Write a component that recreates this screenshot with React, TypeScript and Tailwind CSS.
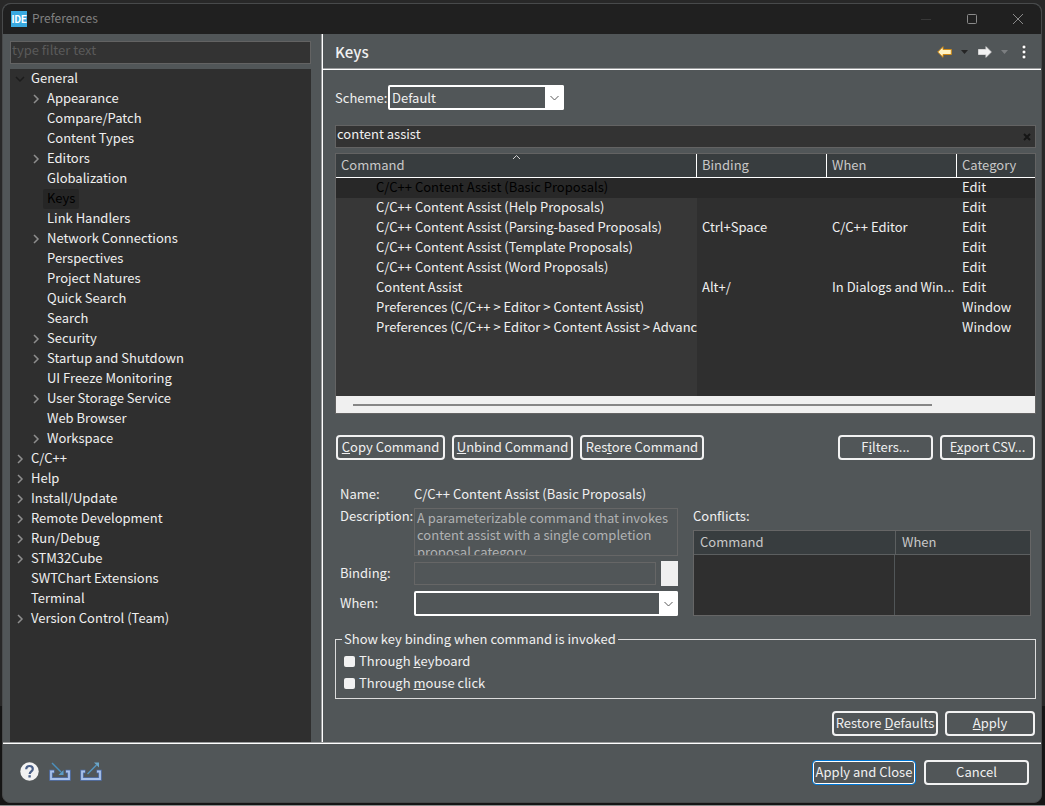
import React, { useState } from 'react';
import clsx from 'clsx';

interface TreeNode {
  label: string;
  level: number;
  state?: 'open' | 'closed';
}

interface CommandRow {
  command: string;
  binding?: string;
  when?: string;
  category: string;
}

const treeNodes: TreeNode[] = [
  { label: 'General', level: 0, state: 'open' },
  { label: 'Appearance', level: 1, state: 'closed' },
  { label: 'Compare/Patch', level: 1 },
  { label: 'Content Types', level: 1 },
  { label: 'Editors', level: 1, state: 'closed' },
  { label: 'Globalization', level: 1 },
  { label: 'Keys', level: 1 },
  { label: 'Link Handlers', level: 1 },
  { label: 'Network Connections', level: 1, state: 'closed' },
  { label: 'Perspectives', level: 1 },
  { label: 'Project Natures', level: 1 },
  { label: 'Quick Search', level: 1 },
  { label: 'Search', level: 1 },
  { label: 'Security', level: 1, state: 'closed' },
  { label: 'Startup and Shutdown', level: 1, state: 'closed' },
  { label: 'UI Freeze Monitoring', level: 1 },
  { label: 'User Storage Service', level: 1, state: 'closed' },
  { label: 'Web Browser', level: 1 },
  { label: 'Workspace', level: 1, state: 'closed' },
  { label: 'C/C++', level: 0, state: 'closed' },
  { label: 'Help', level: 0, state: 'closed' },
  { label: 'Install/Update', level: 0, state: 'closed' },
  { label: 'Remote Development', level: 0, state: 'closed' },
  { label: 'Run/Debug', level: 0, state: 'closed' },
  { label: 'STM32Cube', level: 0, state: 'closed' },
  { label: 'SWTChart Extensions', level: 0 },
  { label: 'Terminal', level: 0 },
  { label: 'Version Control (Team)', level: 0, state: 'closed' },
];

const commands: CommandRow[] = [
  { command: 'C/C++ Content Assist (Basic Proposals)', category: 'Edit' },
  { command: 'C/C++ Content Assist (Help Proposals)', category: 'Edit' },
  { command: 'C/C++ Content Assist (Parsing-based Proposals)', binding: 'Ctrl+Space', when: 'C/C++ Editor', category: 'Edit' },
  { command: 'C/C++ Content Assist (Template Proposals)', category: 'Edit' },
  { command: 'C/C++ Content Assist (Word Proposals)', category: 'Edit' },
  { command: 'Content Assist', binding: 'Alt+/', when: 'In Dialogs and Win...', category: 'Edit' },
  { command: 'Preferences (C/C++ > Editor > Content Assist)', category: 'Window' },
  { command: 'Preferences (C/C++ > Editor > Content Assist > Advanced)', category: 'Window' },
];

const Chevron: React.FC<{ open?: boolean }> = ({ open }) => (
  <svg width="10" height="10" viewBox="0 0 10 10" fill="none" strokeWidth="1.5">
    {open ? (
      <path d="M1 3l4 4 4-4" stroke="#1c1c1c" />
    ) : (
      <path d="M3 1l4 4-4 4" stroke="#8e8e8e" />
    )}
  </svg>
);

interface PushButtonProps {
  children: React.ReactNode;
  className?: string;
  primary?: boolean;
}

const PushButton: React.FC<PushButtonProps> = ({ children, className, primary }) => (
  <button
    type="button"
    className={clsx(
      'flex h-[25px] shrink-0 items-center justify-center rounded-sm pb-0.5 whitespace-nowrap',
      primary
        ? 'border border-[#0078d7] shadow-[inset_0_0_0_1px_#ffffff]'
        : 'border-2 border-[#f2f2f2]',
      className
    )}
  >
    {children}
  </button>
);

const Combo: React.FC<{ id: string; options: string[]; className?: string }> = ({ id, options, className }) => (
  <div className={clsx('relative h-[25px]', className)}>
    <select
      id={id}
      className="h-full w-full appearance-none rounded-xs border-2 border-white bg-[#515658] pl-0.5 outline-none"
    >
      {options.map((option) => (
        <option key={option}>{option}</option>
      ))}
    </select>
    <span className="pointer-events-none absolute inset-y-0 right-0 flex w-[19px] items-center justify-center rounded-r-xs bg-white">
      <svg width="9" height="6" viewBox="0 0 9 6" fill="none" stroke="#5a5a5a">
        <path d="M.5 1l4 4 4-4" />
      </svg>
    </span>
  </div>
);

const TitleBar: React.FC = () => (
  <header className="flex h-[30px] items-center rounded-t-lg bg-[#202020] pl-2 text-[#808080]">
    <svg width="16" height="16" viewBox="0 0 16 16">
      <rect width="16" height="16" fill="#39a9e0" />
      <text x="8" y="11.5" textAnchor="middle" fontFamily="Roboto, sans-serif" fontSize="10" fontWeight="700" fill="#fff">
        IDE
      </text>
    </svg>
    <h1 className="ml-[5px] flex-1 pb-0.5 text-xs">Preferences</h1>
    <button type="button" aria-label="Minimize" className="flex h-full w-[46px] items-center justify-center">
      <svg width="10" height="10"><path d="M0 5.5h10" stroke="#383838" /></svg>
    </button>
    <button type="button" aria-label="Maximize" className="flex h-full w-[46px] items-center justify-center">
      <svg width="10" height="10" fill="none"><rect x=".5" y=".5" width="9" height="9" rx="1" stroke="#8a8a8a" /></svg>
    </button>
    <button type="button" aria-label="Close" className="flex h-full w-[46px] items-center justify-center">
      <svg width="10" height="10"><path d="M0 0l10 10M10 0L0 10" stroke="#8a8a8a" /></svg>
    </button>
  </header>
);

const Sidebar: React.FC = () => (
  <aside className="flex w-[319px] shrink-0 flex-col pt-[7px] pr-[11px] pl-[7px]">
    <input
      type="text"
      aria-label="Filter preferences"
      placeholder="type filter text"
      className="h-[23px] border border-[#636363] bg-[#333333] px-px pb-1.5 outline-none placeholder:text-[#5a5a5a]"
    />
    <ul className="mt-[5px] flex-1 bg-[#2f2f2f]">
      {treeNodes.map((node) => (
        <li key={node.label} className={clsx('flex h-5 items-center', node.level === 0 ? 'pl-[5px]' : 'pl-[21px]')}>
          <span className="flex w-3 shrink-0">
            {node.state && <Chevron open={node.state === 'open'} />}
          </span>
          <span className={clsx('h-5 px-1 leading-[18px]', node.label === 'Keys' && 'rounded-xs bg-[#262626] text-black')}>
            {node.label}
          </span>
        </li>
      ))}
    </ul>
  </aside>
);

const PageHeader: React.FC = () => (
  <div className="flex h-9 items-center border-b border-white pr-[14px] pl-3 shadow-[inset_0_-1px_0_#9a9c9d]">
    <h2 className="flex-1 text-[15px] font-medium">Keys</h2>
    <button type="button" aria-label="Back" className="flex">
      <svg width="15" height="12" viewBox="0 0 15 12">
        <path d="M.7 6L6 .7V3.500h8.300v5H6v2.800z" fill="#fff3c4" stroke="#d08a14" />
      </svg>
    </button>
    <button type="button" aria-label="Back history" className="ml-[9px] flex">
      <svg width="7" height="4"><path d="M0 0h7L3.500 4z" fill="#252525" /></svg>
    </button>
    <button type="button" aria-label="Forward" className="ml-2.5 flex">
      <svg width="14" height="12" viewBox="0 0 14 12">
        <path d="M13.300 6L8 .7V3.500H.5v5H8v2.800z" fill="#f2f2f2" stroke="#d4d4d4" />
      </svg>
    </button>
    <button type="button" aria-label="Forward history" className="ml-[9px] flex">
      <svg width="7" height="4"><path d="M0 0h7L3.500 4z" fill="#7b7e80" /></svg>
    </button>
    <button type="button" aria-label="View menu" className="ml-[13px] flex">
      <svg width="6" height="16" viewBox="0 0 6 16" fill="#fff" stroke="#3a3a3a" strokeWidth=".8">
        <circle cx="3" cy="3" r="2" />
        <circle cx="3" cy="8" r="2" />
        <circle cx="3" cy="13" r="2" />
      </svg>
    </button>
  </div>
);

const headCell = 'h-6 border-b border-white bg-[#383d3f] pb-0.5 pl-[5px] text-left font-normal text-[#c8c8c8]';

const CommandTable: React.FC = () => (
  <div className="mt-[5px] border border-[#636363] bg-[#2f2f2f]">
    <div className="h-[242px] overflow-hidden bg-[linear-gradient(to_right,#373737_361px,#2f2f2f_361px)]">
      <table className="w-full table-fixed border-separate border-spacing-0">
        <thead>
          <tr>
            <th className={clsx(headCell, 'relative w-[361px] border-r')}>
              Command
              <svg width="7" height="4" className="absolute inset-x-0 top-px mx-auto" fill="none" stroke="#d0d0d0">
                <path d="M0 4l3.500-3.500L7 4" />
              </svg>
            </th>
            <th className={clsx(headCell, 'w-[130px] border-r')}>Binding</th>
            <th className={clsx(headCell, 'w-[130px] border-r')}>When</th>
            <th className={headCell}>Category</th>
          </tr>
        </thead>
        <tbody>
          {commands.map((row, index) => (
            <tr key={row.command} className={clsx('h-5 whitespace-nowrap', index === 0 && 'bg-[#282828]')}>
              <td className={clsx('overflow-hidden pb-0.5 pl-10', index === 0 && 'text-black')}>{row.command}</td>
              <td className="pb-0.5 pl-[5px]">{row.binding}</td>
              <td className="pb-0.5 pl-[5px]">{row.when}</td>
              <td className="pb-0.5 pl-[5px]">{row.category}</td>
            </tr>
          ))}
        </tbody>
      </table>
    </div>
    <div className="flex h-[17px] items-center bg-[#f0f0f0] px-[17px]">
      <div className="h-0.5 w-[87%] bg-[#868686]"></div>
    </div>
  </div>
);

const BindingDetails: React.FC = () => (
  <div className="mt-6 flex pl-[5px]">
    <div className="w-[338px] shrink-0">
      <div className="flex h-[19px] items-center">
        <span className="w-[74px]">Name:</span>
        <span className="whitespace-nowrap">C/C++ Content Assist (Basic Proposals)</span>
      </div>
      <div className="mt-[5px] flex">
        <label htmlFor="description" className="w-[74px] leading-4">Description:</label>
        <textarea
          id="description"
          readOnly
          className="h-12 w-[264px] resize-none overflow-hidden border border-[#666666] px-0.5 leading-[17px] text-[#b0b2b3] outline-none"
          defaultValue="A parameterizable command that invokes content assist with a single completion proposal category"
        />
      </div>
      <div className="mt-[5px] flex h-[25px] items-center">
        <label htmlFor="binding" className="w-[74px] pb-0.5">Binding:</label>
        <input id="binding" type="text" className="h-[23px] w-[242px] border border-[#666666] px-0.5 outline-none" />
        <button type="button" aria-label="Add special key" className="ml-[5px] h-full flex-1 bg-[#f0f0f0]"></button>
      </div>
      <div className="mt-[5px] flex items-center">
        <label htmlFor="when" className="w-[74px] pb-0.5">When:</label>
        <Combo id="when" options={['']} className="flex-1" />
      </div>
    </div>
    <div className="mt-6 mr-[5px] ml-[15px] flex flex-1 flex-col">
      <span id="conflicts" className="leading-4">Conflicts:</span>
      <div className="mt-1.5 flex-1 border border-[#666666] bg-[linear-gradient(to_right,#2f2f2f_200px,#515658_200px,#515658_201px,#2f2f2f_201px)]">
        <table aria-labelledby="conflicts" className="w-full table-fixed border-separate border-spacing-0">
          <thead>
            <tr className="text-left text-[#c8c8c8]">
              <th className="h-6 w-[202px] border-r border-b border-[#5c5f60] bg-[#383d3f] pb-0.5 pl-1.5 font-normal">Command</th>
              <th className="h-6 border-b border-[#5c5f60] bg-[#383d3f] pb-0.5 pl-1.5 font-normal">When</th>
            </tr>
          </thead>
        </table>
      </div>
    </div>
  </div>
);

const KeysPage: React.FC = () => {
  const [filter, setFilter] = useState('content assist');

  return (
    <main className="flex min-w-0 flex-1 flex-col border-l border-white shadow-[-1px_0_0_#9a9c9d]">
      <PageHeader />
      <div className="flex flex-1 flex-col pt-[15px] pr-[5px] pb-1.5 pl-3">
        <div className="flex items-center">
          <label htmlFor="scheme" className="w-[53px]">Scheme:</label>
          <Combo id="scheme" options={['Default']} className="w-[176px]" />
        </div>

        <div className="mt-[15px] flex h-[23px] items-center border border-[#636363] bg-[#333333]">
          <input
            type="text"
            aria-label="Filter commands"
            value={filter}
            onChange={(e) => setFilter(e.target.value)}
            className="h-full flex-1 px-px pb-1.5 outline-none"
          />
          <button type="button" aria-label="Clear" className="mr-1 flex" onClick={() => setFilter('')}>
            <svg width="8" height="8" stroke="#161616" strokeWidth="2"><path d="M1 1l6 6M7 1L1 7" /></svg>
          </button>
        </div>

        <CommandTable />

        <div className="mt-[21px] flex gap-[7px] px-px">
          <PushButton className="w-[109px]"><span><u>C</u>opy Command</span></PushButton>
          <PushButton className="w-[121px]"><span><u>U</u>nbind Command</span></PushButton>
          <PushButton className="w-[124px]"><span>Res<u>t</u>ore Command</span></PushButton>
          <PushButton className="ml-auto w-[95px]"><span>F<u>i</u>lters...</span></PushButton>
          <PushButton className="w-[95px]"><span>E<u>x</u>port CSV...</span></PushButton>
        </div>

        <BindingDetails />

        <fieldset className="mt-[14px] border border-[#dcdcdc] pt-0.5 pb-1 pl-2">
          <legend className="-ml-0.5 h-[18px] px-0.5 leading-[18px]">Show key binding when command is invoked</legend>
          <label className="flex h-[22px] items-center gap-1">
            <input type="checkbox" className="size-[11px] appearance-none rounded-xs bg-[#f2f2f2]" />
            <span>Through <u>k</u>eyboard</span>
          </label>
          <label className="flex h-[22px] items-center gap-1">
            <input type="checkbox" className="size-[11px] appearance-none rounded-xs bg-[#f2f2f2]" />
            <span>Through <u>m</u>ouse click</span>
          </label>
        </fieldset>

        <div className="mt-auto flex justify-end gap-[7px] pr-px">
          <PushButton className="w-[106px]"><span>Restore <u>D</u>efaults</span></PushButton>
          <PushButton className="w-[90px]"><span><u>A</u>pply</span></PushButton>
        </div>
      </div>
    </main>
  );
};

const Footer: React.FC = () => (
  <footer className="flex h-[60px] items-center border-t border-[#9a9c9d] pr-3 pl-[17px] shadow-[inset_0_1px_0_#ffffff]">
    <button type="button" aria-label="Help" className="flex pb-0.5">
      <svg width="19" height="19" viewBox="0 0 19 19" fill="none">
        <circle cx="9.500" cy="9.500" r="9.200" fill="#f2f2f2" />
        <path d="M6.200 7.200c0-2 1.300-3.200 3.300-3.200s3.300 1.100 3.300 2.900c0 2.300-3.100 2.500-3.100 5" stroke="#4a5f87" strokeWidth="2.200" />
        <rect x="8.400" y="13.200" width="2.400" height="2.300" fill="#4a5f87" />
      </svg>
    </button>
    <button type="button" aria-label="Import" className="ml-2.5 flex pb-0.5">
      <svg width="22" height="19" viewBox="0 0 22 19" fill="none">
        <path d="M5.500 9.500H2V17h18V9.500h-3.500" stroke="#5273b0" strokeWidth="3.500" />
        <path d="M5 9.500H2V17h18V9.500h-3" stroke="#a9c2ea" strokeWidth="1.800" />
        <path d="M3 1l9 9" stroke="#4b8fbd" strokeWidth="1.400" />
        <path d="M14.500 8v5h-5z" fill="#5a9cc6" />
      </svg>
    </button>
    <button type="button" aria-label="Export" className="ml-[9px] flex pb-0.5">
      <svg width="22" height="19" viewBox="0 0 22 19" fill="none">
        <path d="M5.500 9.500H2V17h18V9.500h-3.500" stroke="#5273b0" strokeWidth="3.500" />
        <path d="M5 9.500H2V17h18V9.500h-3" stroke="#a9c2ea" strokeWidth="1.800" />
        <path d="M7.500 12l9-9" stroke="#5596bf" strokeWidth="1.400" />
        <path d="M14 .500h5v5z" fill="#6ba6c8" />
      </svg>
    </button>
    <PushButton className="ml-auto w-[104px]" primary>Apply and Close</PushButton>
    <PushButton className="ml-2 w-[105px]">Cancel</PushButton>
  </footer>
);

const App: React.FC = () => {
  return (
    <div className="flex min-h-screen flex-col border-b border-[#8c8c8c] bg-[linear-gradient(to_bottom,#282828_706px,#151515_706px)] pt-[3px] pr-[3px] pb-0.5 pl-0.5 font-['Noto_Sans_CJK_SC','Noto_Sans',sans-serif] text-[13px] leading-4 text-[#f0f0f0]">
      <div className="flex flex-1 flex-col rounded-lg border border-[#484a4b] bg-[#515658]">
        <TitleBar />
        <div className="flex flex-1">
          <Sidebar />
          <KeysPage />
        </div>
        <Footer />
      </div>
    </div>
  );
};

export default App;
